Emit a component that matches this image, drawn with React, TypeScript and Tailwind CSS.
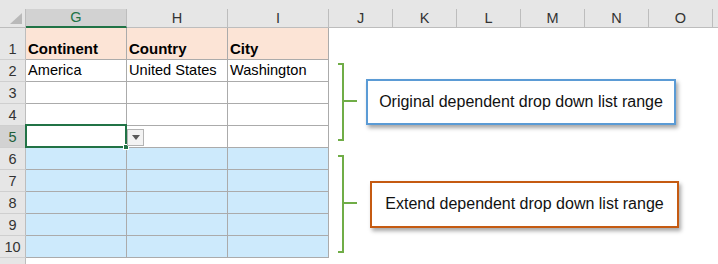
const sideCols = ['J', 'K', 'L', 'M', 'N', 'O'];

type Row = { n: number; cells: string[]; kind: 'head' | 'plain' | 'blue' };

const rows: Row[] = [
  { n: 1, cells: ['Continent', 'Country', 'City'], kind: 'head' },
  { n: 2, cells: ['America', 'United States', 'Washington'], kind: 'plain' },
  { n: 3, cells: ['', '', ''], kind: 'plain' },
  { n: 4, cells: ['', '', ''], kind: 'plain' },
  { n: 5, cells: ['', '', ''], kind: 'plain' },
  { n: 6, cells: ['', '', ''], kind: 'blue' },
  { n: 7, cells: ['', '', ''], kind: 'blue' },
  { n: 8, cells: ['', '', ''], kind: 'blue' },
  { n: 9, cells: ['', '', ''], kind: 'blue' },
  { n: 10, cells: ['', '', ''], kind: 'blue' },
];

function ColumnHeaders() {
  return (
    <div className="flex h-[28px] items-end bg-[#e6e6e6]">
      <div className="relative h-[19px] w-[26px] border-r border-b border-[#bdbdbd]">
        <svg className="absolute left-[10px] top-[4px]" width="12" height="11" viewBox="0 0 12 11">
          <polygon points="12,0 12,11 0,11" fill="#b9b9b9" />
        </svg>
      </div>
      <div className="flex h-[19px] w-[101px] items-center justify-center border-r border-b-2 border-r-[#bdbdbd] border-b-[#217346] bg-[#d2d2d2] pt-[1px] text-[14.5px] text-[#217346]">
        G
      </div>
      {['H', 'I'].map((c) => (
        <div
          key={c}
          className="flex h-[19px] w-[101px] items-center justify-center border-r border-b border-[#bdbdbd] pt-[1px] text-[14.5px] text-[#333]"
        >
          {c}
        </div>
      ))}
      {sideCols.map((c) => (
        <div
          key={c}
          className="flex h-[19px] w-[64px] items-center justify-center border-r border-b border-[#bdbdbd] pt-[1px] text-[14.5px] text-[#333]"
        >
          {c}
        </div>
      ))}
      <div className="h-[19px] flex-1 border-b border-[#bdbdbd]" />
    </div>
  );
}

function SheetRow({ row }: { row: Row }) {
  const tall = row.kind === 'head';
  const fill =
    row.kind === 'head' ? 'bg-[#fce4d6]' : row.kind === 'blue' ? 'bg-[#cdeafc]' : 'bg-white';
  const active = row.n === 5;

  return (
    <div className={tall ? 'flex h-[32px]' : 'flex h-[22px]'}>
      <div
        className={
          active
            ? 'flex w-[26px] items-end justify-center border-r border-b border-r-[#bdbdbd] border-b-[#cfcfcf] bg-[#d2d2d2] pb-[2px] text-[14.5px] leading-[16px] text-[#1e5e3a]'
            : 'flex w-[26px] items-end justify-center border-r border-b border-r-[#bdbdbd] border-b-[#cfcfcf] bg-[#e6e6e6] pb-[2px] text-[14.5px] leading-[16px] text-[#333]'
        }
      >
        {row.n}
      </div>
      {row.cells.map((text, i) => (
        <div
          key={i}
          className={`relative flex w-[101px] items-end border-r border-b border-[#ababab] pb-[2px] pl-[2px] leading-[17px] text-black ${fill} ${
            tall ? 'text-[15px] font-bold' : 'text-[14.6px]'
          }`}
        >
          {text}
          {active && i === 0 && (
            <>
              {/* active cell frame, fill handle and the list's drop-down button */}
              <div className="absolute -left-[1px] -top-[2px] -right-[1px] -bottom-[1px] z-10 border-2 border-[#217346]" />
              <div className="absolute -right-[3px] -bottom-[3px] z-20 h-[6px] w-[6px] border border-white bg-[#217346]" />
              <div className="absolute left-[101px] top-[3px] z-20 flex h-[17px] w-[17px] items-center justify-center border border-[#b4b4b4] bg-[#f3f3f3]">
                <svg width="8" height="5" viewBox="0 0 8 5">
                  <polygon points="0,0 8,0 4,5" fill="#5a5a5a" />
                </svg>
              </div>
            </>
          )}
        </div>
      ))}
    </div>
  );
}

function Bracket({ h, mid }: { h: number; mid: number }) {
  return (
    <svg width="20" height={h} viewBox={`0 0 20 ${h}`} className="shrink-0">
      <path
        d={`M1 1 H6 V${h - 1} H1 M6 ${mid} H20`}
        fill="none"
        stroke="#70ad47"
        strokeWidth="2"
      />
    </svg>
  );
}

export default function App() {
  return (
    <div className="h-[264px] w-[718px] overflow-hidden bg-white font-['Liberation_Sans',Arial,sans-serif]">
      <ColumnHeaders />
      <div className="flex">
        <div className="flex w-[329px] flex-col">
          {rows.map((row) => (
            <SheetRow key={row.n} row={row} />
          ))}
          <div className="h-[10px] w-[26px] border-r border-[#bdbdbd] bg-[#e6e6e6]" />
        </div>

        <div className="flex flex-1 flex-col pl-[8px]">
          <div className="mt-[35px] flex items-center">
            <Bracket h={78} mid={38} />
            <div className="ml-[9px] flex h-[46px] w-[310px] items-center justify-center border-2 border-[#5b9bd5] bg-white text-[16px] text-[#111] shadow-[2px_3px_4px_rgba(0,0,0,0.35)]">
              Original dependent drop down list range
            </div>
          </div>
          <div className="mt-[14px] flex items-center">
            <Bracket h={98} mid={48} />
            <div className="ml-[13px] flex h-[47px] w-[309px] items-center justify-center border-2 border-[#c55a11] bg-white text-[16px] text-[#111] shadow-[2px_3px_4px_rgba(0,0,0,0.35)]">
              Extend dependent drop down list range
            </div>
          </div>
        </div>
      </div>
    </div>
  );
}
